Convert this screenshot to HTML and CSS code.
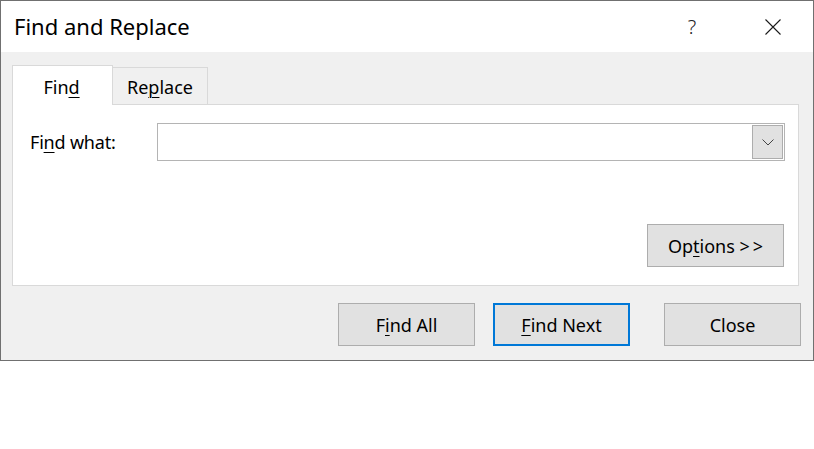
FILE: index.html
```html
<!DOCTYPE html>
<html lang="en">
<head>
<meta charset="utf-8">
<title>Find and Replace</title>
<link rel="stylesheet" href="styles.css">
</head>
<body>
<div class="dialog">
  <div class="titlebar">
    <div class="title">Find and Replace</div>
    <div class="help">?</div>
    <div class="close-x">
      <svg width="16" height="16" viewBox="0 0 16 16"><path d="M0.5 0.5 L15.5 15.5 M15.5 0.5 L0.5 15.5" stroke="#1a1a1a" stroke-width="1.1" fill="none"/></svg>
    </div>
  </div>
  <div class="body">
    <div class="tabs">
      <div class="tab active">Fin<u>d</u></div>
      <div class="tab">Re<u>p</u>lace</div>
    </div>
    <div class="panel">
      <div class="row">
        <label class="label">Fi<u>n</u>d what:</label>
        <div class="combo">
          <div class="combo-btn">
            <svg width="12" height="7" viewBox="0 0 12 7"><path d="M0.5 0.5 L6 6 L11.5 0.5" stroke="#444" stroke-width="1" fill="none"/></svg>
          </div>
        </div>
      </div>
      <div class="options-row">
        <button class="btn">Op<u>t</u>ions <span class="gt">&gt;&gt;</span></button>
      </div>
    </div>
    <div class="footer">
      <button class="btn">F<u>i</u>nd All</button>
      <button class="btn focused"><u>F</u>ind Next</button>
      <button class="btn close">Close</button>
    </div>
  </div>
</div>
</body>
</html>
```

FILE: styles.css
```css
html, body {
  margin: 0;
  padding: 0;
  background: #ffffff;
}
body {
  font-family: "Noto Sans", "Open Sans", "DejaVu Sans", sans-serif;
  font-size: 18px;
  color: #000;
}
.dialog {
  width: 814px;
  height: 361px;
  box-sizing: border-box;
  border: 1px solid #707070;
  display: flex;
  flex-direction: column;
  background: #f0f0f0;
}
.titlebar {
  height: 51px;
  background: #ffffff;
  display: flex;
  align-items: center;
  padding-left: 13px;
  flex: none;
}
.title {
  font-size: 22px;
  flex: 1;
  margin-top: -1px;
}
.help {
  font-size: 20px;
  color: #222;
  width: 20px;
  text-align: center;
  margin-right: 63px;
  font-weight: 300;
}
.close-x {
  width: 16px;
  height: 16px;
  margin-right: 32px;
  display: flex;
}
.body {
  flex: 1;
  display: flex;
  flex-direction: column;
  padding: 13px 14px 0 11px;
}
.tabs {
  display: flex;
  align-items: flex-end;
  height: 39px;
  position: relative;
  z-index: 1;
}
.tab {
  box-sizing: border-box;
  height: 37px;
  width: 95px;
  border: 1px solid #d9d9d9;
  border-bottom: none;
  border-left: none;
  background: #f0f0f0;
  display: flex;
  align-items: center;
  justify-content: center;
  padding-top: 2px;
}
.tab.active {
  height: 40px;
  width: 101px;
  background: #ffffff;
  border-left: 1px solid #d9d9d9;
  margin-bottom: -1px;
  padding-top: 3px;
  padding-right: 2px;
}
.panel {
  box-sizing: border-box;
  height: 182px;
  background: #ffffff;
  border: 1px solid #d9d9d9;
  padding: 18px 13px 18px 17px;
  display: flex;
  flex-direction: column;
  justify-content: space-between;
}
.row {
  display: flex;
  align-items: center;
}
.label {
  width: 127px;
  flex: none;
  letter-spacing: -0.2px;
}
.combo {
  flex: 1;
  box-sizing: border-box;
  height: 38px;
  border: 1px solid #b4b4b4;
  background: #fff;
  display: flex;
  justify-content: flex-end;
  align-items: center;
  padding-right: 1px;
}
.combo-btn {
  box-sizing: border-box;
  width: 31px;
  height: 34px;
  background: #e1e1e1;
  border: 1px solid #adadad;
  display: flex;
  align-items: center;
  justify-content: center;
}
.options-row {
  display: flex;
  justify-content: flex-end;
  padding-right: 1px;
}
.btn {
  font: inherit;
  color: #000;
  box-sizing: border-box;
  width: 137px;
  height: 43px;
  background: #e1e1e1;
  border: 1px solid #adadad;
  padding: 0;
  margin: 0;
}
.gt {
  letter-spacing: 3px;
  margin-right: -3px;
}
.btn.focused {
  border: 2px solid #0078d7;
}
.footer {
  display: flex;
  justify-content: flex-end;
  padding-top: 17px;
  gap: 18px;
  margin-right: -2px;
}
.btn.close {
  margin-left: 16px;
}
u {
  text-decoration-thickness: 1px;
  text-underline-offset: 3px;
}
```
